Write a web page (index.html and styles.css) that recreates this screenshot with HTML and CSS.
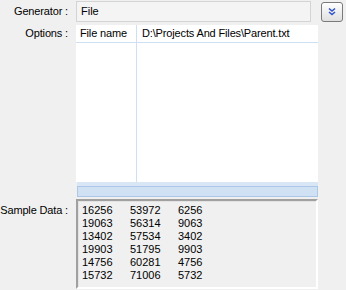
FILE: index.html
```html
<!DOCTYPE html>
<html>
<head>
<meta charset="utf-8">
<link rel="stylesheet" href="styles.css">
</head>
<body>
<div class="form">
  <div class="row row-gen">
    <div class="label">Generator :</div>
    <div class="combo">File</div>
    <div class="btn">
      <svg width="12" height="10" viewBox="0 0 12 10">
        <path d="M3 1.5 L6 4 L9 1.5 M3 5 L6 7.5 L9 5" fill="none" stroke="#2f55c6" stroke-width="1.6"/>
      </svg>
    </div>
  </div>
  <div class="row row-opt">
    <div class="label">Options :</div>
    <div class="opt-wrap">
      <div class="list">
        <div class="col col-name">
          <div class="cell head">File name</div>
        </div>
        <div class="col col-val">
          <div class="cell head">D:\Projects And Files\Parent.txt</div>
        </div>
      </div>
      <div class="bar"><div class="bar-inner"></div></div>
    </div>
  </div>
  <div class="row row-sample">
    <div class="label">Sample Data :</div>
    <div class="sample">
      <span>16256</span><span>53972</span><span>6256</span>
      <span>19063</span><span>56314</span><span>9063</span>
      <span>13402</span><span>57534</span><span>3402</span>
      <span>19903</span><span>51795</span><span>9903</span>
      <span>14756</span><span>60281</span><span>4756</span>
      <span>15732</span><span>71006</span><span>5732</span>
    </div>
  </div>
</div>
</body>
</html>
```

FILE: styles.css
```css
html, body {
  margin: 0;
  padding: 0;
  background: #f0f0f0;
}
body {
  font-family: "Liberation Sans", Arial, sans-serif;
  font-size: 11px;
  color: #000;
  width: 346px;
  height: 290px;
  overflow: hidden;
}
.form {
  display: flex;
  flex-direction: column;
  padding-top: 1px;
}
.row {
  display: flex;
  align-items: flex-start;
}
.label {
  width: 68px;
  padding-right: 8px;
  text-align: right;
  flex: none;
  white-space: nowrap;
  letter-spacing: -0.15px;
}
.row-gen .label {
  line-height: 21px;
}
.combo {
  height: 19px;
  line-height: 19px;
  border: 1px solid #d4d4d4;
  background: #f4f4f4;
  padding-left: 4px;
  box-sizing: content-box;
  width: 229px;
}
.btn {
  margin-left: 10px;
  margin-top: 1px;
  width: 20px;
  height: 18px;
  border: 1px solid #7a7a7a;
  border-radius: 3px;
  background: linear-gradient(#ffffff, #ececec 60%, #e0e0e0);
  display: flex;
  align-items: center;
  justify-content: center;
}
.row-opt {
  margin-top: 3px;
}
.row-opt .label {
  line-height: 17px;
}
.opt-wrap {
  width: 242px;
  display: flex;
  flex-direction: column;
}
.list {
  height: 157px;
  background: #fff;
  display: flex;
}
.col {
  height: 100%;
}
.col-name {
  width: 60px;
  border-right: 1px solid #cfe0f2;
  flex: none;
}
.col-val {
  flex: 1;
}
.cell.head {
  height: 17px;
  line-height: 17px;
  border-bottom: 1px solid #cfe0f2;
  white-space: nowrap;
  letter-spacing: -0.15px;
}
.col-name .head {
  padding-left: 4px;
}
.col-val .head {
  padding-left: 5px;
}
.bar {
  margin-left: 1px;
  width: 241px;
  height: 15px;
  background: #d9e6f5;
  display: flex;
  flex-direction: column;
  justify-content: flex-end;
}
.bar-inner {
  height: 9px;
  border: 1px solid #acc7e8;
  background: #d0e1f3;
}
.row-sample {
  margin-top: 2px;
}
.row-sample .label {
  padding-top: 5px;
  line-height: 13px;
}
.sample {
  border-style: solid;
  border-width: 2px;
  border-color: #a0a0a0 #ffffff #ffffff #a0a0a0;
  box-shadow: inset 1px 1px 0 #e3e3e3;
  background: #f0f0f0;
  padding: 3px 0 0 4px;
  box-sizing: content-box;
  width: 234px;
  height: 83px;
  display: grid;
  grid-template-columns: 48px 48px 48px;
  grid-auto-rows: 13px;
  line-height: 13px;
  align-content: start;
}
```
